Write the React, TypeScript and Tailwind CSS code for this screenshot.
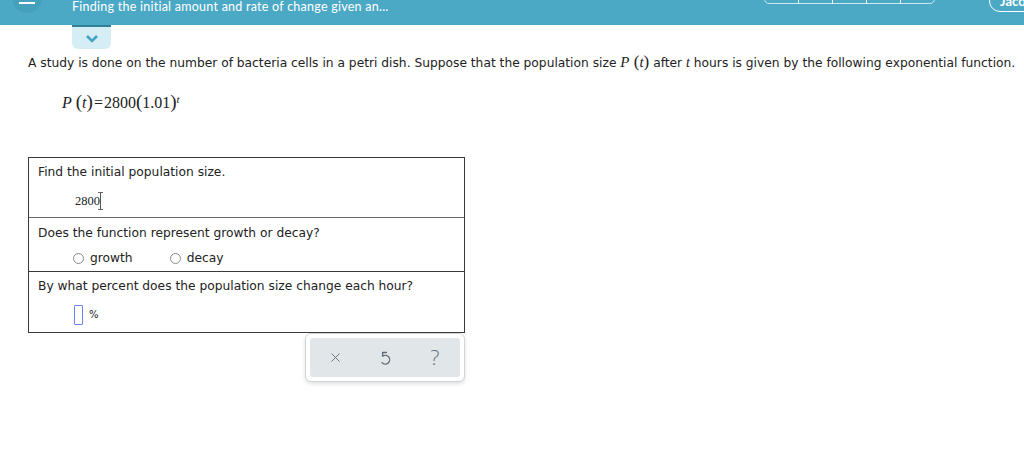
import { X } from "lucide-react";

const serif = "font-['Liberation_Serif','Times_New_Roman',serif]";

function Radio({ label }: { label: string }) {
  return (
    <label className="flex items-center gap-[6px]">
      <span className="w-[11px] h-[11px] rounded-full border border-[#8a8a8a] bg-white" />
      <span>{label}</span>
    </label>
  );
}

function ResetIcon() {
  return (
    <svg width="12" height="16" viewBox="0 0 12 16" fill="none" stroke="currentColor" strokeWidth="1.3" strokeLinecap="round" strokeLinejoin="round">
      <path d="M7.5 2.5 H3.6 V6.2 A4.4 4.4 0 1 1 3 12.6" />
    </svg>
  );
}

export default function App() {
  return (
    <div className="relative w-[1024px] h-[450px] overflow-hidden bg-white text-[#222] font-['DejaVu_Sans',Verdana,sans-serif]">
      <header className="flex items-start h-[25px] bg-[#4ba9c6] overflow-hidden">
        <div className="ml-[12px] -mt-[17px] w-[30px] h-[30px] rounded-full bg-[#45a0bc] flex items-end justify-center pb-[9px]">
          <span className="block w-[16px] h-[2px] bg-white" />
        </div>
        <h1 className="ml-[30px] mt-0 text-white text-[12.5px] leading-[14px] font-['Lato',sans-serif] tracking-[0.25px]">
          Finding the initial amount and rate of change given an...
        </h1>
        <div className="ml-auto flex -mt-[8px]">
          {[0, 1, 2, 3, 4].map((i) => (
            <span
              key={i}
              className={
                "block w-[35px] h-[12px] border border-white/70 -ml-px " +
                (i === 0 ? "rounded-bl-[5px]" : "") +
                (i === 4 ? " rounded-br-[5px]" : "")
              }
            />
          ))}
        </div>
        <div className="ml-[54px] -mr-[20px] -mt-[10px] h-[22px] px-[10px] rounded-full border border-white text-white text-[13px] leading-[20px] font-['Lato',sans-serif] font-bold">
          Jacob
        </div>
      </header>

      <div className="ml-[72px] w-[39px] h-[24px] rounded-b-[6px] bg-[#d5edf4] border-t-2 border-[#2f7f97] flex items-center justify-center">
        <svg width="14" height="9" viewBox="0 0 14 9">
          <path d="M2 2 L7 7 L12 2" fill="none" stroke="#45a3c1" strokeWidth="2.6" />
        </svg>
      </div>

      <p className="ml-[28px] mt-[6px] text-[12.25px] leading-[14px] whitespace-nowrap">
        A study is done on the number of bacteria cells in a petri dish. Suppose that the population size{" "}
        <span className={`${serif} text-[15px]`}>
          <i>P</i>
          <span className="text-[17px]"> (</span>
          <i>t</i>
          <span className="text-[17px]">)</span>
        </span>{" "}
        after <i className={`${serif} text-[14px]`}>t</i> hours is given by the following exponential function.
      </p>

      <div className={`ml-[62px] mt-[22px] ${serif} text-[16px] leading-[20px] flex items-baseline`}>
        <i>P</i>
        <span className="ml-[4px] text-[19px]">(</span>
        <i>t</i>
        <span className="text-[19px]">)</span>
        <span className="mx-[1px]">=</span>
        <span>2800</span>
        <span className="text-[19px]">(</span>
        <span>1.01</span>
        <span className="text-[19px]">)</span>
        <i className="text-[11px] self-start -mt-[3px]">t</i>
      </div>

      <div className="ml-[28px] mt-[44px] w-[437px] border border-[#3a3a3a] text-[12.25px] leading-[14px]">
        <div className="h-[60px] px-[9px] pt-[7px] border-b border-[#666]">
          <div>Find the initial population size.</div>
          <div className={`ml-[37px] mt-[13px] flex items-center ${serif} text-[12.5px]`}>
            <span>2800</span>
            <span className="relative w-[5px] h-[18px] -ml-[2px]">
              <span className="absolute left-[2px] top-0 bottom-0 w-px bg-[#555]" />
              <span className="absolute left-0 top-0 w-[5px] h-px bg-[#666]" />
              <span className="absolute left-0 bottom-0 w-[5px] h-px bg-[#666]" />
            </span>
          </div>
        </div>
        <div className="h-[54px] px-[9px] pt-[8px] border-b border-[#3a3a3a]">
          <div>Does the function represent growth or decay?</div>
          <div className="ml-[35px] mt-[11px] flex gap-[37px]">
            <Radio label="growth" />
            <Radio label="decay" />
          </div>
        </div>
        <div className="h-[60px] px-[9px] pt-[7px]">
          <div>By what percent does the population size change each hour?</div>
          <div className="ml-[36px] mt-[12px] flex items-center gap-[6px]">
            <span className="w-[9px] h-[20px] border-[1.5px] border-[#6b85f0] rounded-[1px]" />
            <span className="text-[10px]">%</span>
          </div>
        </div>
      </div>

      <div className="ml-[305px] mt-0 w-[160px] h-[49px] p-[4px] rounded-[6px] border border-[#cfd4d8] bg-white shadow-[0_2px_4px_rgba(0,0,0,0.12)]">
        <div className="h-full rounded-[3px] bg-[#e1e6e9] flex items-center text-[#5b6b76]">
          <span className="w-[50px] flex justify-center">
            <X size={15} strokeWidth={1.4} />
          </span>
          <span className="w-[50px] flex justify-center">
            <ResetIcon />
          </span>
          <span className="w-[50px] flex justify-center text-[21px] font-['Open_Sans',sans-serif] font-light leading-none text-[#5f6f7a]">
            ?
          </span>
        </div>
      </div>
    </div>
  );
}
